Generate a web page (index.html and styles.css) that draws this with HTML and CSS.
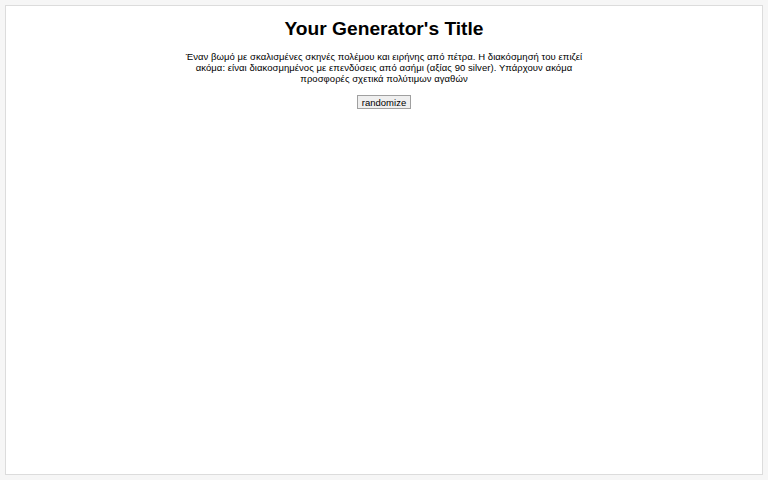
FILE: index.html
```html
<!DOCTYPE html>
<html>
<head>
<meta charset="utf-8">
<link rel="stylesheet" href="styles.css">
</head>
<body>
<div class="frame">
  <h1 class="title">Your Generator's Title</h1>
  <p class="output">Έναν βωμό με σκαλισμένες σκηνές πολέμου και ειρήνης από πέτρα. Η διακόσμησή του επιζεί ακόμα: είναι διακοσμημένος με επενδύσεις από ασήμι (αξίας 90 silver). Υπάρχουν ακόμα προσφορές σχετικά πολύτιμων αγαθών</p>
  <div class="actions"><button class="btn">randomize</button></div>
</div>
</body>
</html>
```
FILE: styles.css
```css
html, body {
  margin: 0;
  padding: 0;
  background: #f6f6f6;
}
body {
  padding: 5px;
  box-sizing: border-box;
  height: 480px;
}
.frame {
  box-sizing: border-box;
  height: 470px;
  background: #ffffff;
  border: 1px solid #dcdcdc;
  font-family: "Liberation Sans", Arial, sans-serif;
  color: #000;
  text-align: center;
  padding-top: 12px;
}
.title {
  margin: 0;
  font-size: 19.2px;
  font-weight: bold;
  line-height: 22px;
}
.output {
  width: 400px;
  margin: 11px auto 0;
  font-size: 9.5px;
  line-height: 11px;
  letter-spacing: 0.05px;
}
.actions {
  margin-top: 8px;
}
.btn {
  font-family: "Liberation Sans", Arial, sans-serif;
  font-size: 9.5px;
  padding: 1px 4px 0;
  background: #efefef;
  border: 1px solid #a0a0a0;
  border-radius: 0;
  color: #000;
  line-height: 11px;
}
```
